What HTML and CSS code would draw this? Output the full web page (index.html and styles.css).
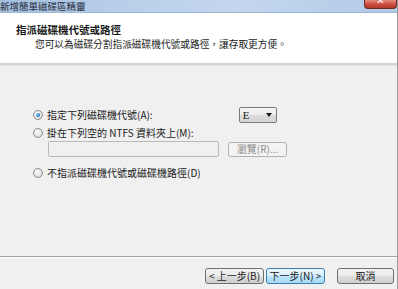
FILE: index.html
```html
<!DOCTYPE html>
<html lang="zh-Hant">
<head>
<meta charset="utf-8">
<link rel="stylesheet" href="styles.css">
</head>
<body>
<div class="window">
  <div class="titlebar">
    <span class="title-text">新增簡單磁碟區精靈</span>
    <span class="close-btn"><span class="close-x">✕</span></span>
  </div>
  <div class="header">
    <div class="header-title">指派磁碟機代號或路徑</div>
    <div class="header-sub">您可以為磁碟分割指派磁碟機代號或路徑，讓存取更方便。</div>
  </div>
  <div class="header-sep"></div>
  <div class="content">
    <div class="row row-first">
      <label class="opt"><span class="radio checked"></span><span>指定下列磁碟機代號(A):</span></label>
      <div class="combo"><span class="combo-val">E</span><span class="combo-arrow"></span></div>
    </div>
    <div class="row row-second">
      <label class="opt"><span class="radio"></span><span>掛在下列空的 NTFS 資料夾上(M):</span></label>
    </div>
    <div class="row row-field">
      <div class="field"></div>
      <div class="btn btn-browse">瀏覽(R)...</div>
    </div>
    <div class="row row-third">
      <label class="opt"><span class="radio"></span><span>不指派磁碟機代號或磁碟機路徑(D)</span></label>
    </div>
  </div>
  <div class="footer-sep"></div>
  <div class="footer">
    <div class="btn btn-back">&lt; 上一步(B)</div>
    <div class="btn btn-next">下一步(N) &gt;</div>
    <div class="btn btn-cancel">取消</div>
  </div>
</div>
</body>
</html>
```
FILE: styles.css
```css
html, body {
  margin: 0;
  padding: 0;
  background: #f0f0f0;
}
.window {
  width: 398px;
  height: 289px;
  display: flex;
  flex-direction: column;
  background: #f0f0f0;
  font-family: "Noto Sans CJK TC", "Noto Sans", sans-serif;
  font-size: 10px;
  color: #1a1a1a;
  box-sizing: border-box;
  border-right: 1px solid #9a9a9a;
  overflow: hidden;
}
.titlebar {
  height: 13px;
  flex: none;
  display: flex;
  align-items: flex-start;
  background: linear-gradient(90deg, #a3bfdd 0%, #b8cfe9 30%, #c3d7ee 60%, #b1cae6 100%);
  border-bottom: 1px solid #9fb7d2;
  box-sizing: border-box;
}
.title-text {
  font-size: 9.5px;
  line-height: 12px;
  color: #1e2a3a;
  white-space: nowrap;
}
.close-btn {
  margin-left: auto;
  width: 33px;
  height: 9px;
  background: linear-gradient(180deg, #e08a7c 0%, #c8483a 60%, #b23b2e 100%);
  border: 1px solid #6b2a24;
  border-top: none;
  border-radius: 0 0 4px 4px;
  box-sizing: border-box;
  display: flex;
  justify-content: center;
  overflow: hidden;
}
.close-x {
  color: #ffffff;
  font-size: 10px;
  line-height: 8px;
  margin-top: -3px;
  font-family: "DejaVu Sans", sans-serif;
  font-weight: bold;
}
.header {
  height: 50px;
  flex: none;
  background: #ffffff;
  padding: 10px 0 0 16px;
  box-sizing: border-box;
}
.header-title {
  font-weight: bold;
  font-size: 10.5px;
  line-height: 14px;
}
.header-sub {
  padding-left: 19px;
  font-size: 9.7px;
  line-height: 14px;
}
.header-sep {
  height: 2px;
  flex: none;
  background: #d3d3d3;
  border-bottom: 1px solid #e6e6e6;
}
.content {
  flex: 1;
  display: flex;
  flex-direction: column;
  padding-left: 33px;
}
.row {
  display: flex;
  align-items: center;
}
.row-first {
  margin-top: 41px;
  height: 16px;
}
.row-second {
  height: 14px;
  margin-top: 3px;
}
.row-field {
  margin-top: 1px;
  height: 16px;
  padding-left: 15px;
}
.row-third {
  margin-top: 9px;
  height: 14px;
}
.opt {
  display: flex;
  align-items: center;
  gap: 4px;
  white-space: nowrap;
  line-height: 14px;
}
.radio {
  width: 10px;
  height: 10px;
  border-radius: 50%;
  box-sizing: border-box;
  border: 1px solid #8e8e8e;
  background: radial-gradient(circle at 40% 35%, #ffffff 0%, #e4e4e4 55%, #c8c8c8 100%);
  display: flex;
  align-items: center;
  justify-content: center;
  flex: none;
}
.radio.checked::after {
  content: "";
  width: 4px;
  height: 4px;
  border-radius: 50%;
  background: radial-gradient(circle at 35% 35%, #8ed0f5 0%, #2b7fc6 60%, #1b4f8a 100%);
}
.combo {
  margin-left: 86px;
  width: 38px;
  height: 16px;
  box-sizing: border-box;
  border: 1px solid #7a7a7a;
  border-radius: 2px;
  background: linear-gradient(180deg, #f5f5f5 0%, #ebebeb 50%, #dcdcdc 51%, #d4d4d4 100%);
  display: flex;
  align-items: center;
  padding: 0 4px 0 3px;
}
.combo-val {
  font-family: "Liberation Serif", serif;
  font-size: 11px;
  line-height: 14px;
}
.combo-arrow {
  margin-left: auto;
  width: 0;
  height: 0;
  border-left: 3px solid transparent;
  border-right: 3px solid transparent;
  border-top: 4px solid #1a1a1a;
}
.field {
  width: 171px;
  height: 16px;
  box-sizing: border-box;
  border: 1px solid #b9b9b9;
  border-radius: 2px;
  background: #f0f0f0;
}
.btn {
  box-sizing: border-box;
  height: 16px;
  display: flex;
  align-items: center;
  justify-content: center;
  border: 1px solid #707070;
  border-radius: 3px;
  background: linear-gradient(180deg, #f2f2f2 0%, #ebebeb 50%, #dddddd 51%, #cfcfcf 100%);
  font-size: 10px;
  line-height: 14px;
  white-space: nowrap;
}
.btn-browse {
  margin-left: 9px;
  width: 59px;
  height: 15px;
  border-color: #adb2b5;
  background: #f4f4f4;
  color: #8d8d8d;
}
.footer-sep {
  height: 1px;
  flex: none;
  background: #a0a0a0;
  border-bottom: 1px solid #ffffff;
}
.footer {
  height: 31px;
  flex: none;
  display: flex;
  align-items: flex-start;
  padding: 10px 0 0 205px;
  box-sizing: border-box;
}
.btn-back {
  width: 59px;
}
.btn-next {
  width: 59px;
  margin-left: 2px;
  border-color: #3c7fb1;
  background: linear-gradient(180deg, #eaf6fd 0%, #d9f0fc 50%, #bee6fd 51%, #a7d9f5 100%);
}
.btn-cancel {
  width: 57px;
  margin-left: 12px;
}
```
